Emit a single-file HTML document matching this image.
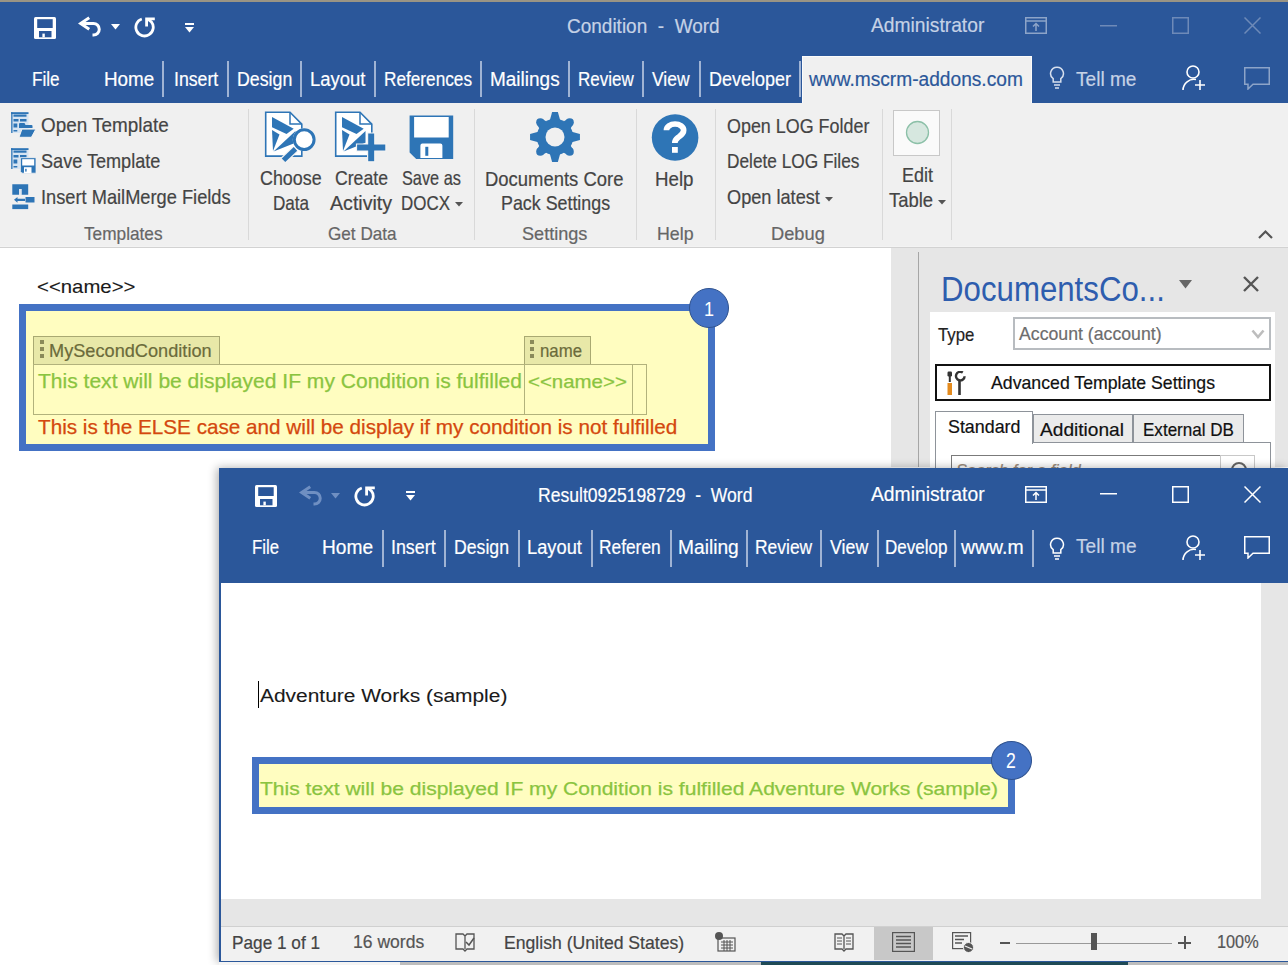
<!DOCTYPE html>
<html><head><meta charset="utf-8"><style>
html,body{margin:0;padding:0;}
body{width:1288px;height:965px;overflow:hidden;position:relative;background:#fff;font-family:"Liberation Sans",sans-serif;}
.r{position:absolute;display:block;}
.t{position:absolute;white-space:nowrap;line-height:1;transform-origin:0 0;-webkit-text-stroke:0.2px currentColor;}
</style></head><body>
<div class="r" style="left:0px;top:0px;width:1288px;height:103px;background:#2B579A;"></div>
<div class="r" style="left:0px;top:0px;width:1288px;height:2px;background:#9A9484;"></div>
<svg class="r" style="left:34px;top:17px;" width="22" height="22" viewBox="0 0 22 22"><rect x="0" y="0" width="22" height="22" rx="1.5" fill="#fff"/><rect x="3.2" y="2.2" width="15.5" height="8.8" fill="#2B579A"/><rect x="5" y="14" width="12.5" height="6.3" fill="#2B579A"/><rect x="8.4" y="16.6" width="2.4" height="3.7" fill="#fff"/></svg>
<svg class="r" style="left:78px;top:16px;" width="24" height="23" viewBox="0 0 24 23"><path d="M2 7.5 H15.5 A5.75 5.75 0 0 1 15.5 19 H14.5" fill="none" stroke="#fff" stroke-width="3" stroke-linecap="butt"/><path d="M10 2.5 L2.6 7.5 L10 12.5" fill="none" stroke="#fff" stroke-width="3" stroke-linejoin="miter" stroke-linecap="square"/></svg>
<svg class="r" style="left:111px;top:24px;" width="9" height="6" viewBox="0 0 9 6"><path d="M0 0 H9 L4.5 5.5Z" fill="#fff"/></svg>
<svg class="r" style="left:134px;top:16px;" width="22" height="22" viewBox="0 0 22 22"><path d="M7.8 3.0 A8.7 8.7 0 1 0 17.4 5.9 L14 3.2" fill="none" stroke="#fff" stroke-width="2.8"/><path d="M20.8 2.8 H12.6 V10.5" fill="none" stroke="#fff" stroke-width="2.8" stroke-linejoin="miter"/></svg>
<svg class="r" style="left:185px;top:23px;" width="10" height="10" viewBox="0 0 10 10"><rect x="0" y="0" width="9" height="2" fill="#fff"/><path d="M0 4 H9 L4.5 9.5Z" fill="#fff"/></svg>
<div class="t" style="left:567.00px;top:15.97px;font-size:20.35px;color:#C6D2E6;transform:scaleX(0.9334);">Condition&nbsp; -&nbsp; Word</div>
<div class="t" style="left:871.00px;top:15.32px;font-size:20.06px;color:#C6D2E6;transform:scaleX(0.9594);">Administrator</div>
<svg class="r" style="left:1025px;top:17px;" width="22" height="17" viewBox="0 0 22 17"><rect x="0.75" y="0.75" width="20.5" height="15.5" fill="none" stroke="#8DA4C8" stroke-width="1.5"/><line x1="1" y1="4" x2="21" y2="4" stroke="#8DA4C8" stroke-width="1.5"/><path d="M11 14 V7 M8 9.5 L11 6.5 L14 9.5" fill="none" stroke="#8DA4C8" stroke-width="1.5"/></svg>
<svg class="r" style="left:1100px;top:25px;" width="17" height="2" viewBox="0 0 17 2"><rect width="17" height="1.5" fill="#6E8AB8"/></svg>
<svg class="r" style="left:1172px;top:17px;" width="17" height="17" viewBox="0 0 17 17"><rect x="0.75" y="0.75" width="15.5" height="15.5" fill="none" stroke="#6E8AB8" stroke-width="1.5"/></svg>
<svg class="r" style="left:1244px;top:17px;" width="17" height="17" viewBox="0 0 17 17"><path d="M0.5 0.5 L16.5 16.5 M16.5 0.5 L0.5 16.5" stroke="#6E8AB8" stroke-width="1.5"/></svg>
<div class="t" style="left:32.00px;top:68.87px;font-size:20.35px;color:#FFFFFF;transform:scaleX(0.8415);">File</div>
<div class="t" style="left:104.00px;top:68.87px;font-size:20.35px;color:#FFFFFF;transform:scaleX(0.9263);">Home</div>
<div class="r" style="left:162px;top:61px;width:2px;height:36px;background:#9FB3D4;"></div>
<div class="t" style="left:174.00px;top:68.87px;font-size:20.35px;color:#FFFFFF;transform:scaleX(0.8703);">Insert</div>
<div class="r" style="left:227px;top:61px;width:2px;height:36px;background:#9FB3D4;"></div>
<div class="t" style="left:236.60px;top:68.87px;font-size:20.35px;color:#FFFFFF;transform:scaleX(0.8736);">Design</div>
<div class="r" style="left:300px;top:61px;width:2px;height:36px;background:#9FB3D4;"></div>
<div class="t" style="left:310.00px;top:68.87px;font-size:20.35px;color:#FFFFFF;transform:scaleX(0.9083);">Layout</div>
<div class="r" style="left:374px;top:61px;width:2px;height:36px;background:#9FB3D4;"></div>
<div class="t" style="left:383.50px;top:68.87px;font-size:20.35px;color:#FFFFFF;transform:scaleX(0.8463);">References</div>
<div class="r" style="left:480px;top:61px;width:2px;height:36px;background:#9FB3D4;"></div>
<div class="t" style="left:490.10px;top:68.87px;font-size:20.35px;color:#FFFFFF;transform:scaleX(0.9330);">Mailings</div>
<div class="r" style="left:568px;top:61px;width:2px;height:36px;background:#9FB3D4;"></div>
<div class="t" style="left:577.50px;top:68.87px;font-size:20.35px;color:#FFFFFF;transform:scaleX(0.8368);">Review</div>
<div class="r" style="left:642px;top:61px;width:2px;height:36px;background:#9FB3D4;"></div>
<div class="t" style="left:652.30px;top:68.87px;font-size:20.35px;color:#FFFFFF;transform:scaleX(0.8607);">View</div>
<div class="r" style="left:699px;top:61px;width:2px;height:36px;background:#9FB3D4;"></div>
<div class="t" style="left:708.50px;top:68.87px;font-size:20.35px;color:#FFFFFF;transform:scaleX(0.8847);">Developer</div>
<div class="r" style="left:799px;top:61px;width:2px;height:36px;background:#9FB3D4;"></div>
<div class="r" style="left:802px;top:56px;width:230px;height:47px;background:#F0F0F0;border:1px solid #FBFBFB;border-bottom:none;box-sizing:border-box;"></div>
<div class="t" style="left:808.89px;top:68.87px;font-size:20.35px;color:#2B579A;transform:scaleX(0.9411);">www.mscrm-addons.com</div>
<svg class="r" style="left:1049px;top:66px;" width="16" height="23" viewBox="0 0 16 23"><path d="M8 1.2 A6.3 6.3 0 0 0 4.2 12.6 V16 H11.8 V12.6 A6.3 6.3 0 0 0 8 1.2Z" fill="none" stroke="#D8E0EE" stroke-width="1.5"/><path d="M5 19 H11 M6 22 H10" stroke="#D8E0EE" stroke-width="1.5"/></svg>
<div class="t" style="left:1076.20px;top:68.87px;font-size:20.35px;color:#C6D2E6;transform:scaleX(0.9380);">Tell me</div>
<svg class="r" style="left:1182px;top:65px;" width="25" height="26" viewBox="0 0 25 26"><circle cx="11" cy="7" r="6" fill="none" stroke="#FFFFFF" stroke-width="1.6"/><path d="M1 25 A11 11 0 0 1 14 14.5" fill="none" stroke="#FFFFFF" stroke-width="1.6"/><path d="M18 15 V25 M13 20 H23" stroke="#FFFFFF" stroke-width="1.6"/></svg>
<svg class="r" style="left:1244px;top:67px;" width="26" height="23" viewBox="0 0 26 23"><path d="M0.75 0.75 H25.25 V17.25 H9 L4 22 V17.25 H0.75Z" fill="none" stroke="#8DA4C8" stroke-width="1.5" stroke-linejoin="miter"/></svg>
<div class="r" style="left:0px;top:103px;width:1288px;height:143px;background:#F0F0F0;"></div>
<div class="r" style="left:0px;top:103px;width:1288px;height:144px;background:#F0F0F0;"></div>
<div class="r" style="left:0px;top:246px;width:1288px;height:1px;background:#F3F3F3;"></div>
<div class="r" style="left:0px;top:247px;width:1288px;height:1px;background:#D2D2D2;"></div>
<div class="r" style="left:248px;top:109px;width:1px;height:131px;background:#D9D9D9;"></div>
<div class="r" style="left:474px;top:109px;width:1px;height:131px;background:#D9D9D9;"></div>
<div class="r" style="left:636px;top:109px;width:1px;height:131px;background:#D9D9D9;"></div>
<div class="r" style="left:715px;top:109px;width:1px;height:131px;background:#D9D9D9;"></div>
<div class="r" style="left:882px;top:109px;width:1px;height:131px;background:#D9D9D9;"></div>
<div class="r" style="left:951px;top:109px;width:1px;height:131px;background:#D9D9D9;"></div>
<div class="t" style="left:41.30px;top:115.89px;font-size:19.62px;color:#444444;transform:scaleX(0.9623);">Open Template</div>
<div class="t" style="left:41.30px;top:152.19px;font-size:19.62px;color:#444444;transform:scaleX(0.9227);">Save Template</div>
<div class="t" style="left:41.30px;top:187.89px;font-size:19.62px;color:#444444;transform:scaleX(0.9304);">Insert MailMerge Fields</div>
<div class="t" style="left:84.40px;top:225.22px;font-size:18.17px;color:#666666;transform:scaleX(0.9493);">Templates</div>
<div class="t" style="left:260.40px;top:169.29px;font-size:19.62px;color:#444444;transform:scaleX(0.9112);">Choose</div>
<div class="t" style="left:272.90px;top:193.89px;font-size:19.62px;color:#444444;transform:scaleX(0.8720);">Data</div>
<div class="t" style="left:335.00px;top:169.29px;font-size:19.62px;color:#444444;transform:scaleX(0.8998);">Create</div>
<div class="t" style="left:330.00px;top:193.89px;font-size:19.62px;color:#444444;">Activity</div>
<div class="t" style="left:401.80px;top:169.29px;font-size:19.62px;color:#444444;transform:scaleX(0.8307);">Save as</div>
<div class="t" style="left:401.00px;top:193.89px;font-size:19.62px;color:#444444;transform:scaleX(0.8642);">DOCX</div>
<svg class="r" style="left:455px;top:202px;" width="8" height="5" viewBox="0 0 8 5"><path d="M0 0 H8 L4 4.5Z" fill="#555"/></svg>
<div class="t" style="left:327.70px;top:225.22px;font-size:18.17px;color:#666666;transform:scaleX(0.9437);">Get Data</div>
<div class="t" style="left:485.00px;top:169.59px;font-size:19.62px;color:#444444;transform:scaleX(0.9409);">Documents Core</div>
<div class="t" style="left:500.60px;top:193.89px;font-size:19.62px;color:#444444;transform:scaleX(0.9100);">Pack Settings</div>
<div class="t" style="left:522.00px;top:225.22px;font-size:18.17px;color:#666666;transform:scaleX(0.9970);">Settings</div>
<div class="t" style="left:655.00px;top:169.89px;font-size:19.62px;color:#444444;transform:scaleX(0.9554);">Help</div>
<div class="t" style="left:657.00px;top:225.22px;font-size:18.17px;color:#666666;transform:scaleX(0.9786);">Help</div>
<div class="t" style="left:727.00px;top:116.69px;font-size:19.62px;color:#444444;transform:scaleX(0.9135);">Open LOG Folder</div>
<div class="t" style="left:727.00px;top:151.89px;font-size:19.62px;color:#444444;transform:scaleX(0.8804);">Delete LOG Files</div>
<div class="t" style="left:727.00px;top:187.89px;font-size:19.62px;color:#444444;transform:scaleX(0.9263);">Open latest</div>
<svg class="r" style="left:825px;top:197px;" width="8" height="5" viewBox="0 0 8 5"><path d="M0 0 H8 L4 4.5Z" fill="#555"/></svg>
<div class="t" style="left:771.00px;top:225.22px;font-size:18.17px;color:#666666;transform:scaleX(1.0056);">Debug</div>
<div class="t" style="left:902.00px;top:166.29px;font-size:19.62px;color:#444444;transform:scaleX(0.9172);">Edit</div>
<div class="t" style="left:888.90px;top:190.89px;font-size:19.62px;color:#444444;transform:scaleX(0.9403);">Table</div>
<svg class="r" style="left:938px;top:200px;" width="8" height="5" viewBox="0 0 8 5"><path d="M0 0 H8 L4 4.5Z" fill="#555"/></svg>
<svg class="r" style="left:1258px;top:229px;" width="15" height="10" viewBox="0 0 15 10"><path d="M1 9 L7.5 2.5 L14 9" fill="none" stroke="#555" stroke-width="2.2"/></svg>
<svg class="r" style="left:6px;top:108px;" width="34" height="34" viewBox="0 0 34 34"><rect x="5" y="4.2" width="17.5" height="20.8" fill="#D6E4F2"/><rect x="5" y="4.2" width="17.5" height="1.8" fill="#2E75B6"/><rect x="5" y="4.2" width="1.6" height="20.8" fill="#2E75B6" opacity="0.8"/><rect x="7.5" y="6.5" width="13" height="2.2" fill="#2E75B6"/><rect x="7.5" y="11" width="5" height="2.5" fill="#2E75B6"/><rect x="14" y="11" width="6.5" height="2.5" fill="#2E75B6"/><rect x="7.5" y="15.5" width="3.8" height="4" fill="#2E75B6"/><rect x="7.5" y="22" width="3.8" height="1.5" fill="#2E75B6"/><path d="M13 16 Q13 15 14 15 H18.5 L19.5 17 H25.5 Q26.5 17 26.5 18 V20 H13Z" fill="#2E75B6"/><path d="M15.9 21.1 H29.9 L25.4 29.3 H13Z" fill="#2E75B6" stroke="#F3F3F3" stroke-width="1"/></svg>
<svg class="r" style="left:6px;top:144px;" width="34" height="34" viewBox="0 0 34 34"><rect x="5" y="4.2" width="17.5" height="20.8" fill="#D6E4F2"/><rect x="5" y="4.2" width="17.5" height="1.8" fill="#2E75B6"/><rect x="5" y="4.2" width="1.6" height="20.8" fill="#2E75B6" opacity="0.8"/><rect x="7.5" y="6.5" width="13" height="2.2" fill="#2E75B6"/><rect x="7.5" y="11" width="5" height="2.5" fill="#2E75B6"/><rect x="14" y="11" width="6.5" height="2.5" fill="#2E75B6"/><rect x="7.5" y="15.5" width="3.8" height="4" fill="#2E75B6"/><rect x="7.5" y="22" width="3.8" height="1.5" fill="#2E75B6"/><path d="M14.4 13.7 H30 V29.2 H16 L14.4 27.6Z" fill="#2E75B6" stroke="#F3F3F3" stroke-width="0.8"/><rect x="16.2" y="15.2" width="12" height="6.3" fill="#fff"/><rect x="18" y="23.2" width="7.5" height="6" fill="#fff"/><rect x="19.2" y="24.8" width="1.4" height="2.8" fill="#2E75B6"/></svg>
<svg class="r" style="left:6px;top:180px;" width="34" height="34" viewBox="0 0 34 34"><path d="M6.3 4.2 H22.2 V14.8 H15.5 V9 H13 V14.8 H6.3Z" fill="#2E75B6"/><rect x="13" y="9" width="2.5" height="5.8" fill="#DDE6F0"/><path d="M8 19.8 L11.5 17 V18.7 H19 V21 H11.5 V22.7Z" fill="#2E75B6"/><rect x="19.5" y="17" width="9" height="5.5" fill="#2E75B6"/><rect x="6.3" y="24.5" width="15.9" height="4.6" fill="#2E75B6"/></svg>
<svg class="r" style="left:260px;top:108px;" width="60" height="58" viewBox="0 0 60 58"><path d="M5.7 4.2 H30 L41.8 16.2 V48.1 H5.7Z" fill="#fff" stroke="#2E75B6" stroke-width="1.6" stroke-linejoin="miter"/><path d="M30 4.2 V16 H41.8" fill="none" stroke="#2E75B6" stroke-width="1.5"/><path d="M12 9 L33.7 20.7 L26.5 25.9 L12 19.2Z" fill="#2E75B6"/><path d="M12 22 L19.5 26.5 L13 43Z" fill="#2E75B6"/><path d="M13.5 43.5 L35.5 23 L35.5 34.7Z" fill="#2E75B6"/><path d="M35.5 40.9 L23.5 52.3" stroke="#F3F3F3" stroke-width="7.5"/><path d="M35.5 40.9 L23.5 52.3" stroke="#2E75B6" stroke-width="5"/><circle cx="44.2" cy="31.6" r="11.4" fill="#F3F3F3"/><circle cx="44.2" cy="31.6" r="9.9" fill="#fff" stroke="#2E75B6" stroke-width="3"/></svg>
<svg class="r" style="left:330px;top:108px;" width="60" height="58" viewBox="0 0 60 58"><path d="M5.7 4.2 H30 L41.8 16.2 V48.1 H5.7Z" fill="#fff" stroke="#2E75B6" stroke-width="1.6" stroke-linejoin="miter"/><path d="M30 4.2 V16 H41.8" fill="none" stroke="#2E75B6" stroke-width="1.5"/><path d="M12 9 L33.7 20.7 L26.5 25.9 L12 19.2Z" fill="#2E75B6"/><path d="M12 22 L19.5 26.5 L13 43Z" fill="#2E75B6"/><path d="M13.5 43.5 L35.5 23 L35.5 34.7Z" fill="#2E75B6"/><path d="M37.6 25 H44.8 V36 H55.9 V43 H44.8 V53.8 H37.6 V43 H26.5 V36 H37.6Z" fill="#2E75B6" stroke="#F3F3F3" stroke-width="1.2"/></svg>
<svg class="r" style="left:400px;top:108px;" width="60" height="58" viewBox="0 0 60 58"><path d="M9.6 7.5 H53.2 V51.1 H16.2 L9.6 44.5Z" fill="#2E75B6"/><rect x="14.1" y="9" width="34.6" height="20.5" fill="#fff"/><path d="M20.4 51.1 V37.5 Q20.4 35.5 22.4 35.5 H40.4 Q42.4 35.5 42.4 37.5 V49.9 H20.4Z" fill="#fff"/><rect x="25.3" y="38.8" width="3" height="9" fill="#2E75B6"/></svg>
<svg class="r" style="left:530px;top:112px;" width="50" height="50" viewBox="0 0 50 50"><path d="M19.83 8.28 L22.12 0.07 L27.88 0.07 L30.17 8.28Z" fill="#2E75B6"/><path d="M39.99 17.36 L42.61 13.19 L36.81 7.39 L32.64 10.01Z" fill="#2E75B6"/><circle cx="39.71" cy="10.29" r="4.1" fill="#2E75B6"/><path d="M41.72 19.83 L49.93 22.12 L49.93 27.88 L41.72 30.17Z" fill="#2E75B6"/><path d="M32.64 39.99 L36.81 42.61 L42.61 36.81 L39.99 32.64Z" fill="#2E75B6"/><circle cx="39.71" cy="39.71" r="4.1" fill="#2E75B6"/><path d="M30.17 41.72 L27.88 49.93 L22.12 49.93 L19.83 41.72Z" fill="#2E75B6"/><path d="M10.01 32.64 L7.39 36.81 L13.19 42.61 L17.36 39.99Z" fill="#2E75B6"/><circle cx="10.29" cy="39.71" r="4.1" fill="#2E75B6"/><path d="M8.28 30.17 L0.07 27.88 L0.07 22.12 L8.28 19.83Z" fill="#2E75B6"/><path d="M17.36 10.01 L13.19 7.39 L7.39 13.19 L10.01 17.36Z" fill="#2E75B6"/><circle cx="10.29" cy="10.29" r="4.1" fill="#2E75B6"/><circle cx="25" cy="25" r="18.2" fill="#2E75B6"/><circle cx="25" cy="25" r="9.5" fill="#F0F0F0"/></svg>
<svg class="r" style="left:645px;top:108px;" width="60" height="58" viewBox="0 0 60 58"><circle cx="30.1" cy="29.5" r="23.3" fill="#2E75B6"/><path d="M21.45 22.2 A8.6 6.2 0 0 1 38.65 22.2 C38.65 26 35.5 27.5 33 29.5 C30.8 31.2 29.8 32.5 29.8 35" fill="none" stroke="#fff" stroke-width="5.7"/><rect x="27" y="39" width="5.8" height="5.8" fill="#fff"/></svg>
<svg class="r" style="left:893px;top:110px;" width="47" height="46" viewBox="0 0 47 46"><rect x="0.5" y="0.5" width="46" height="45" fill="#FAFAFA" stroke="#C8C8C8" stroke-width="1"/><circle cx="24.5" cy="22.5" r="11" fill="#D6E7DF" stroke="#8CC0A8" stroke-width="1.3"/></svg>
<div class="r" style="left:0px;top:248px;width:891px;height:717px;background:#FFFFFF;"></div>
<div class="r" style="left:891px;top:248px;width:397px;height:219px;background:#E6E6E6;"></div>
<div class="r" style="left:918px;top:252px;width:1px;height:215px;background:#A6A6A6;"></div>
<div class="r" style="left:930px;top:312px;width:345px;height:155px;background:#FFFFFF;"></div>
<div class="t" style="left:37.40px;top:278.02px;font-size:18.17px;color:#1A1A1A;transform:scaleX(1.1206);-webkit-text-stroke:0.1px currentColor;">&lt;&lt;name&gt;&gt;</div>
<div class="r" style="left:19px;top:304px;width:696px;height:147px;background:#4472C4;"></div>
<div class="r" style="left:26px;top:311px;width:682px;height:133px;background:#FFFDC0;"></div>
<div class="r" style="left:33px;top:336px;width:187px;height:28px;background:#E8E8A8;border:1px solid #A9A972;box-sizing:border-box;border-bottom:none;"></div>
<div class="r" style="left:524px;top:336px;width:67px;height:28px;background:#E8E8A8;border:1px solid #A9A972;box-sizing:border-box;border-bottom:none;"></div>
<div class="r" style="left:33px;top:364px;width:600px;height:51px;background:transparent;border:1px solid #B2B27C;box-sizing:border-box;"></div>
<div class="r" style="left:524px;top:364px;width:109px;height:51px;background:transparent;border:1px solid #B2B27C;box-sizing:border-box;"></div>
<div class="r" style="left:632px;top:364px;width:15px;height:51px;background:transparent;border:1px solid #B2B27C;box-sizing:border-box;"></div>
<div class="r" style="left:40px;top:340px;width:4px;height:4px;background:#8A8A5A;"></div>
<div class="r" style="left:40px;top:347px;width:4px;height:4px;background:#8A8A5A;"></div>
<div class="r" style="left:40px;top:354px;width:4px;height:4px;background:#8A8A5A;"></div>
<div class="r" style="left:530px;top:340px;width:4px;height:4px;background:#8A8A5A;"></div>
<div class="r" style="left:530px;top:347px;width:4px;height:4px;background:#8A8A5A;"></div>
<div class="r" style="left:530px;top:354px;width:4px;height:4px;background:#8A8A5A;"></div>
<div class="t" style="left:49.10px;top:342.54px;font-size:17.44px;color:#6B6B3B;transform:scaleX(1.0423);">MySecondCondition</div>
<div class="t" style="left:540.00px;top:342.54px;font-size:17.44px;color:#6B6B3B;transform:scaleX(0.9633);">name</div>
<div class="t" style="left:37.80px;top:370.92px;font-size:20.06px;color:#8AC43F;transform:scaleX(1.0492);-webkit-text-stroke:0.25px currentColor;">This text will be displayed IF my Condition is fulfilled</div>
<div class="t" style="left:527.50px;top:372.52px;font-size:18.17px;color:#8AC43F;transform:scaleX(1.1251);-webkit-text-stroke:0.25px currentColor;">&lt;&lt;name&gt;&gt;</div>
<div class="t" style="left:37.80px;top:417.02px;font-size:20.06px;color:#D4480E;transform:scaleX(1.0319);-webkit-text-stroke:0.25px currentColor;">This is the ELSE case and will be display if my condition is not fulfilled</div>
<div class="r" style="left:689px;top:288px;width:40px;height:40px;border-radius:50%;background:#4472C4;border:1.5px solid #2F528F;box-sizing:border-box;"></div>
<div class="t" style="left:704.00px;top:299.27px;font-size:20.35px;color:#FFFFFF;transform:scaleX(0.8850);-webkit-text-stroke:0;">1</div>
<div class="t" style="left:940.60px;top:272.24px;font-size:34.45px;color:#2E5DAE;transform:scaleX(0.9065);-webkit-text-stroke:0;">DocumentsCo...</div>
<svg class="r" style="left:1179px;top:280px;" width="13" height="9" viewBox="0 0 13 9"><path d="M0 0 H13 L6.5 8.5Z" fill="#666"/></svg>
<svg class="r" style="left:1243px;top:276px;" width="16" height="16" viewBox="0 0 16 16"><path d="M1 1 L15 15 M15 1 L1 15" stroke="#555" stroke-width="2.4"/></svg>
<div class="t" style="left:938.00px;top:326.02px;font-size:18.17px;color:#222;transform:scaleX(0.9239);">Type</div>
<div class="r" style="left:1013px;top:317px;width:258px;height:33px;background:#FFFFFF;border:2px solid #B8BCC0;box-sizing:border-box;"></div>
<div class="t" style="left:1019.40px;top:325.32px;font-size:18.17px;color:#6D6D6D;transform:scaleX(0.9740);">Account (account)</div>
<svg class="r" style="left:1251px;top:328px;" width="14" height="12" viewBox="0 0 14 12"><path d="M1.5 2.5 L7 9 L12.5 2.5" fill="none" stroke="#BDBDBD" stroke-width="2.6"/></svg>
<div class="r" style="left:935px;top:364px;width:336px;height:37px;background:#FFFFFF;border:2px solid #111;box-sizing:border-box;"></div>
<svg class="r" style="left:946px;top:371px;" width="20" height="26" viewBox="0 0 20 26"><rect x="1.5" y="0.5" width="4.5" height="5" rx="1.2" fill="#333"/><rect x="2.8" y="5" width="2" height="6" fill="#333"/><rect x="1.5" y="12" width="4.5" height="12" fill="#E48B1E"/><path d="M16.8 1.6 A4.3 4.3 0 1 0 18.6 5.2" fill="none" stroke="#333" stroke-width="2.4"/><rect x="12.2" y="9" width="2.6" height="15" fill="#333"/></svg>
<div class="t" style="left:990.90px;top:373.52px;font-size:18.17px;color:#111;transform:scaleX(0.9748);">Advanced Template Settings</div>
<div class="r" style="left:935px;top:442px;width:336px;height:30px;background:#FFFFFF;border:1px solid #8E939A;box-sizing:border-box;"></div>
<div class="r" style="left:1033px;top:414px;width:100px;height:29px;background:#EBEBEB;border:1px solid #8E939A;box-sizing:border-box;"></div>
<div class="r" style="left:1133px;top:414px;width:111px;height:29px;background:#EBEBEB;border:1px solid #8E939A;box-sizing:border-box;"></div>
<div class="r" style="left:935px;top:411px;width:98px;height:33px;background:#FFFFFF;border:1px solid #8E939A;border-bottom:none;box-sizing:border-box;"></div>
<div class="t" style="left:947.50px;top:418.12px;font-size:18.17px;color:#111;transform:scaleX(0.9837);">Standard</div>
<div class="t" style="left:1040.00px;top:420.62px;font-size:18.17px;color:#111;transform:scaleX(1.0526);">Additional</div>
<div class="t" style="left:1143.00px;top:420.62px;font-size:18.17px;color:#111;transform:scaleX(0.9391);">External DB</div>
<div class="r" style="left:951px;top:455px;width:270px;height:14px;background:#FFFFFF;border:1px solid #7A7A7A;box-sizing:border-box;"></div>
<div class="r" style="left:1220px;top:455px;width:35px;height:14px;background:#FFFFFF;border:1px solid #C8C8C8;box-sizing:border-box;"></div>
<div class="t" style="left:956px;top:462px;font-size:16.5px;color:#9A8A7A;font-style:italic">Search for a field</div>
<svg class="r" style="left:1228px;top:460px;" width="22" height="10" viewBox="0 0 22 10"><circle cx="11" cy="10" r="7" fill="none" stroke="#666" stroke-width="2"/></svg>
<div class="r" style="left:219px;top:468px;width:1069px;height:494px;box-shadow:-2px 0px 9px rgba(0,0,0,0.32);background:#fff;"></div>
<div class="r" style="left:219px;top:468px;width:1069px;height:494px;background:#E6E6E6;border:1px solid #2B579A;border-left:2px solid #2B579A;border-right:none;box-sizing:border-box;"></div>
<div class="r" style="left:221px;top:469px;width:1067px;height:114px;background:#2B579A;"></div>
<svg class="r" style="left:255px;top:485px;" width="22" height="22" viewBox="0 0 22 22"><rect x="0" y="0" width="22" height="22" rx="1.5" fill="#fff"/><rect x="3.2" y="2.2" width="15.5" height="8.8" fill="#2B579A"/><rect x="5" y="14" width="12.5" height="6.3" fill="#2B579A"/><rect x="8.4" y="16.6" width="2.4" height="3.7" fill="#fff"/></svg>
<svg class="r" style="left:299px;top:485px;" width="24" height="23" viewBox="0 0 24 23"><path d="M2 7.5 H15.5 A5.75 5.75 0 0 1 15.5 19 H14.5" fill="none" stroke="#6F8FC2" stroke-width="3" stroke-linecap="butt"/><path d="M10 2.5 L2.6 7.5 L10 12.5" fill="none" stroke="#6F8FC2" stroke-width="3" stroke-linejoin="miter" stroke-linecap="square"/></svg>
<svg class="r" style="left:331px;top:493px;" width="9" height="6" viewBox="0 0 9 6"><path d="M0 0 H9 L4.5 5.5Z" fill="#6F8FC2"/></svg>
<svg class="r" style="left:354px;top:485px;" width="22" height="22" viewBox="0 0 22 22"><path d="M7.8 3.0 A8.7 8.7 0 1 0 17.4 5.9 L14 3.2" fill="none" stroke="#fff" stroke-width="2.8"/><path d="M20.8 2.8 H12.6 V10.5" fill="none" stroke="#fff" stroke-width="2.8" stroke-linejoin="miter"/></svg>
<svg class="r" style="left:406px;top:491px;" width="10" height="10" viewBox="0 0 10 10"><rect x="0" y="0" width="9" height="2" fill="#fff"/><path d="M0 4 H9 L4.5 9.5Z" fill="#fff"/></svg>
<div class="t" style="left:538.30px;top:484.77px;font-size:20.35px;color:#FFFFFF;transform:scaleX(0.8632);">Result0925198729&nbsp; -&nbsp; Word</div>
<div class="t" style="left:871.00px;top:484.32px;font-size:20.06px;color:#FFFFFF;transform:scaleX(0.9619);">Administrator</div>
<svg class="r" style="left:1025px;top:486px;" width="22" height="17" viewBox="0 0 22 17"><rect x="0.75" y="0.75" width="20.5" height="15.5" fill="none" stroke="#fff" stroke-width="1.5"/><line x1="1" y1="4" x2="21" y2="4" stroke="#fff" stroke-width="1.5"/><path d="M11 14 V7 M8 9.5 L11 6.5 L14 9.5" fill="none" stroke="#fff" stroke-width="1.5"/></svg>
<svg class="r" style="left:1100px;top:493px;" width="17" height="2" viewBox="0 0 17 2"><rect width="17" height="1.5" fill="#fff"/></svg>
<svg class="r" style="left:1172px;top:486px;" width="17" height="17" viewBox="0 0 17 17"><rect x="0.75" y="0.75" width="15.5" height="15.5" fill="none" stroke="#fff" stroke-width="1.5"/></svg>
<svg class="r" style="left:1244px;top:486px;" width="17" height="17" viewBox="0 0 17 17"><path d="M0.5 0.5 L16.5 16.5 M16.5 0.5 L0.5 16.5" stroke="#fff" stroke-width="1.5"/></svg>
<div class="t" style="left:252.00px;top:537.07px;font-size:20.35px;color:#FFFFFF;transform:scaleX(0.8232);">File</div>
<div class="t" style="left:322.40px;top:537.07px;font-size:20.35px;color:#FFFFFF;transform:scaleX(0.9411);">Home</div>
<div class="r" style="left:382px;top:530px;width:2px;height:37px;background:#9FB3D4;"></div>
<div class="t" style="left:391.00px;top:537.07px;font-size:20.35px;color:#FFFFFF;transform:scaleX(0.8762);">Insert</div>
<div class="r" style="left:444px;top:530px;width:2px;height:37px;background:#9FB3D4;"></div>
<div class="t" style="left:454.00px;top:537.07px;font-size:20.35px;color:#FFFFFF;transform:scaleX(0.8689);">Design</div>
<div class="r" style="left:518px;top:530px;width:2px;height:37px;background:#9FB3D4;"></div>
<div class="t" style="left:527.40px;top:537.07px;font-size:20.35px;color:#FFFFFF;transform:scaleX(0.8985);">Layout</div>
<div class="r" style="left:591px;top:530px;width:2px;height:37px;background:#9FB3D4;"></div>
<div class="t" style="left:599.00px;top:537.07px;font-size:20.35px;color:#FFFFFF;transform:scaleX(0.8522);">Referen</div>
<div class="r" style="left:670px;top:530px;width:2px;height:37px;background:#9FB3D4;"></div>
<div class="t" style="left:677.50px;top:537.07px;font-size:20.35px;color:#FFFFFF;transform:scaleX(0.9426);">Mailing</div>
<div class="r" style="left:746px;top:530px;width:2px;height:37px;background:#9FB3D4;"></div>
<div class="t" style="left:755.00px;top:537.07px;font-size:20.35px;color:#FFFFFF;transform:scaleX(0.8578);">Review</div>
<div class="r" style="left:820px;top:530px;width:2px;height:37px;background:#9FB3D4;"></div>
<div class="t" style="left:830.20px;top:537.07px;font-size:20.35px;color:#FFFFFF;transform:scaleX(0.8744);">View</div>
<div class="r" style="left:877px;top:530px;width:2px;height:37px;background:#9FB3D4;"></div>
<div class="t" style="left:884.70px;top:537.07px;font-size:20.35px;color:#FFFFFF;transform:scaleX(0.8367);">Develop</div>
<div class="r" style="left:954px;top:530px;width:2px;height:37px;background:#9FB3D4;"></div>
<div class="t" style="left:961.40px;top:537.07px;font-size:20.35px;color:#FFFFFF;transform:scaleX(0.9543);">www.m</div>
<div class="r" style="left:1032px;top:530px;width:2px;height:37px;background:#9FB3D4;"></div>
<svg class="r" style="left:1049px;top:537px;" width="16" height="23" viewBox="0 0 16 23"><path d="M8 1.2 A6.3 6.3 0 0 0 4.2 12.6 V16 H11.8 V12.6 A6.3 6.3 0 0 0 8 1.2Z" fill="none" stroke="#FFFFFF" stroke-width="1.5"/><path d="M5 19 H11 M6 22 H10" stroke="#FFFFFF" stroke-width="1.5"/></svg>
<div class="t" style="left:1076.00px;top:536.37px;font-size:20.35px;color:#C6D2E6;transform:scaleX(0.9395);">Tell me</div>
<svg class="r" style="left:1182px;top:535px;" width="25" height="26" viewBox="0 0 25 26"><circle cx="11" cy="7" r="6" fill="none" stroke="#FFFFFF" stroke-width="1.6"/><path d="M1 25 A11 11 0 0 1 14 14.5" fill="none" stroke="#FFFFFF" stroke-width="1.6"/><path d="M18 15 V25 M13 20 H23" stroke="#FFFFFF" stroke-width="1.6"/></svg>
<svg class="r" style="left:1244px;top:536px;" width="26" height="23" viewBox="0 0 26 23"><path d="M0.75 0.75 H25.25 V17.25 H9 L4 22 V17.25 H0.75Z" fill="none" stroke="#FFFFFF" stroke-width="1.5" stroke-linejoin="miter"/></svg>
<div class="r" style="left:221px;top:583px;width:1040px;height:316px;background:#FFFFFF;"></div>
<div class="t" style="left:259.50px;top:685.96px;font-size:19.19px;color:#1A1A1A;transform:scaleX(1.0908);-webkit-text-stroke:0.1px currentColor;">Adventure Works (sample)</div>
<div class="r" style="left:258px;top:681px;width:1px;height:27px;background:#000;"></div>
<div class="r" style="left:252px;top:757px;width:763px;height:57px;background:#4472C4;"></div>
<div class="r" style="left:259px;top:764px;width:749px;height:43px;background:#FFFDC0;"></div>
<div class="t" style="left:259.50px;top:779.36px;font-size:19.19px;color:#8AC43F;transform:scaleX(1.0972);-webkit-text-stroke:0.25px currentColor;">This text will be displayed IF my Condition is fulfilled Adventure Works (sample)</div>
<div class="r" style="left:991px;top:741px;width:41px;height:39px;border-radius:50%;background:#4472C4;border:1.5px solid #2F528F;box-sizing:border-box;"></div>
<div class="t" style="left:1006.40px;top:749.84px;font-size:21.80px;color:#FFFFFF;transform:scaleX(0.8099);-webkit-text-stroke:0;">2</div>
<div class="r" style="left:221px;top:926px;width:1067px;height:35px;background:#F1F1F1;border-top:1px solid #D0D0D0;box-sizing:border-box;"></div>
<div class="t" style="left:231.80px;top:933.82px;font-size:18.17px;color:#444;transform:scaleX(0.9483);">Page 1 of 1</div>
<div class="t" style="left:352.60px;top:932.62px;font-size:18.17px;color:#555;transform:scaleX(0.9661);">16 words</div>
<svg class="r" style="left:455px;top:932px;" width="21" height="20" viewBox="0 0 21 20"><path d="M1 2 H8 L10 4 L12 2 H19 V17 H12 L10 19 L8 17 H1Z M10 4 V17" fill="none" stroke="#555" stroke-width="1.3"/><path d="M11 10 L14 13 L19 6" fill="none" stroke="#555" stroke-width="1.5"/></svg>
<div class="t" style="left:503.50px;top:933.82px;font-size:18.17px;color:#444;transform:scaleX(0.9704);">English (United States)</div>
<svg class="r" style="left:715px;top:932px;" width="21" height="20" viewBox="0 0 21 20"><circle cx="4" cy="4" r="4" fill="#555"/><rect x="3" y="6" width="17" height="13" fill="none" stroke="#555" stroke-width="1.2"/><path d="M6 10 H18 M6 13 H18 M6 16 H18 M9 8 V19 M12 8 V19 M15 8 V19" stroke="#555" stroke-width="1"/></svg>
<svg class="r" style="left:834px;top:932px;" width="20" height="20" viewBox="0 0 20 20"><path d="M1 2 H8 L10 4 L12 2 H19 V17 H12 L10 19 L8 17 H1Z M10 4 V17" fill="none" stroke="#555" stroke-width="1.3"/><path d="M3 6 H8 M3 9 H8 M3 12 H8 M12 6 H17 M12 9 H17 M12 12 H17" stroke="#555" stroke-width="1"/></svg>
<div class="r" style="left:874px;top:927px;width:59px;height:33px;background:#C8C8C8;"></div>
<svg class="r" style="left:892px;top:932px;" width="23" height="20" viewBox="0 0 23 20"><rect x="0.6" y="0.6" width="21.8" height="18.8" fill="none" stroke="#555" stroke-width="1.2"/><path d="M4 4.5 H19 M4 8 H19 M4 11.5 H19 M4 15 H19" stroke="#555" stroke-width="1.3"/></svg>
<svg class="r" style="left:952px;top:932px;" width="23" height="21" viewBox="0 0 23 21"><rect x="0.6" y="0.6" width="18" height="16" fill="none" stroke="#555" stroke-width="1.2"/><path d="M3 4 H16 M3 7.5 H12 M3 11 H10" stroke="#555" stroke-width="1.3"/><circle cx="16.5" cy="15.5" r="5" fill="#555" stroke="#F1F1F1" stroke-width="1"/><path d="M13 14 L20 17" stroke="#F1F1F1" stroke-width="1.2"/></svg>
<div class="r" style="left:1000px;top:942px;width:10px;height:2px;background:#555;"></div>
<div class="r" style="left:1016px;top:943px;width:156px;height:1px;background:#999;"></div>
<div class="r" style="left:1091px;top:933px;width:6px;height:17px;background:#555;"></div>
<div class="r" style="left:1178px;top:942px;width:13px;height:2px;background:#555;"></div>
<div class="r" style="left:1183.5px;top:936px;width:2px;height:13px;background:#555;"></div>
<div class="t" style="left:1216.60px;top:932.62px;font-size:18.17px;color:#555;transform:scaleX(0.8968);">100%</div>
<div class="r" style="left:219px;top:962px;width:181px;height:3px;background:#F4F4F4;"></div>
<div class="r" style="left:400px;top:962px;width:361px;height:3px;background:#BDBDBD;"></div>
<div class="r" style="left:761px;top:962px;width:367px;height:3px;background:#1F4A55;"></div>
<div class="r" style="left:1128px;top:962px;width:160px;height:3px;background:#BDBDBD;"></div>
</body></html>
